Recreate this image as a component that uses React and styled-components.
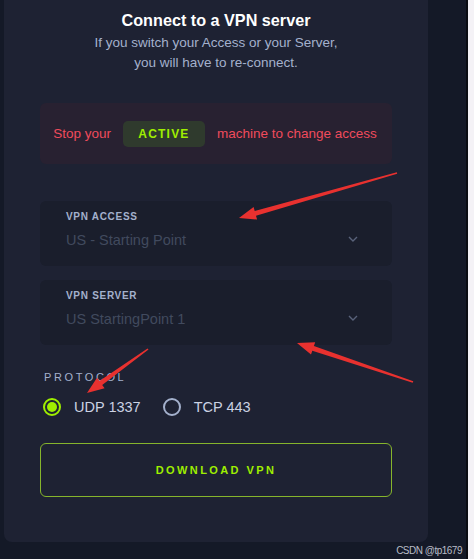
import React, { useState } from 'react';
import styled, { createGlobalStyle } from 'styled-components';

const GlobalStyle = createGlobalStyle`
  html, body {
    margin: 0;
    padding: 0;
    background: #141927;
    font-family: "Liberation Sans", Arial, sans-serif;
  }
  #root {
    height: 559px;
    overflow: hidden;
  }
`;

const Screen = styled.div`
  display: flex;
  height: 559px;
  position: relative;
`;

const Main = styled.div`
  flex: 1;
  display: flex;
  flex-direction: column;
  padding-left: 4px;
`;

const EdgeLine = styled.div`
  width: 2px;
  background: #0a0c12;
`;

const EdgeLight = styled.div`
  width: 6px;
  background: #f4f2f6;
`;

const Panel = styled.div`
  width: 424px;
  height: 542px;
  box-sizing: border-box;
  background: #1e2233;
  border-radius: 0 0 8px 8px;
  padding: 9px 36px 0;
  display: flex;
  flex-direction: column;
  align-items: stretch;
`;

const Title = styled.h1`
  margin: 0;
  text-align: center;
  font-size: 16.2px;
  font-weight: 700;
  color: #ffffff;
  line-height: 22px;
`;

const Subtitle = styled.p`
  margin: 2px 0 0;
  text-align: center;
  font-size: 13.5px;
  line-height: 20px;
  color: #a4b1cd;
`;

const Alert = styled.div`
  margin-top: 30px;
  height: 61px;
  border-radius: 6px;
  background: #282131;
  display: flex;
  align-items: center;
  justify-content: center;
  gap: 12px;
  font-size: 13.5px;
  color: #ef4b5c;
  padding-right: 2px;
`;

const Badge = styled.span`
  width: 82px;
  height: 26px;
  border-radius: 5px;
  background: #2f3a2d;
  color: #9fef00;
  font-weight: 700;
  font-size: 12px;
  letter-spacing: 1.2px;
  display: flex;
  align-items: center;
  justify-content: center;
`;

const SelectBox = styled.div`
  margin-top: ${p => p.$gap}px;
  height: 65px;
  box-sizing: border-box;
  border-radius: 6px;
  background: #1a1e2c;
  padding: 10px 34px 0 26px;
  display: grid;
  grid-template-columns: 1fr auto;
  grid-template-rows: auto auto;
  align-content: start;
  align-items: center;
`;

const FieldLabel = styled.div`
  grid-column: 1 / 3;
  font-size: 10px;
  font-weight: 700;
  letter-spacing: 0.7px;
  color: #a4b1cd;
  line-height: 12px;
`;

const FieldValue = styled.div`
  margin-top: 8px;
  font-size: 14.5px;
  color: #414a5e;
  line-height: 18px;
`;

const Chevron = styled.svg`
  margin-top: 5px;
  width: 10px;
  height: 6px;
`;

const ProtocolLabel = styled.div`
  margin-top: 25px;
  padding-left: 4px;
  font-size: 11px;
  letter-spacing: 2.6px;
  color: #a4b1cd;
  line-height: 14px;
`;

const RadioRow = styled.div`
  margin-top: 14px;
  padding-left: 3px;
  display: flex;
  align-items: center;
  gap: 22px;
`;

const RadioItem = styled.label`
  display: flex;
  align-items: center;
  gap: 13px;
  font-size: 14.5px;
  color: #cbd2e3;
  cursor: pointer;
`;

const RadioCircle = styled.span`
  width: 18px;
  height: 18px;
  box-sizing: border-box;
  border-radius: 50%;
  border: 2px solid ${p => (p.$on ? '#9fef00' : '#a4b1cd')};
  display: flex;
  align-items: center;
  justify-content: center;
  &::after {
    content: '';
    width: 10px;
    height: 10px;
    border-radius: 50%;
    background: ${p => (p.$on ? '#9fef00' : 'transparent')};
  }
`;

const DownloadButton = styled.button`
  margin-top: 27px;
  height: 54px;
  border-radius: 6px;
  border: 1px solid #86b52c;
  background: transparent;
  color: #9fef00;
  font-family: "Liberation Sans", Arial, sans-serif;
  font-weight: 700;
  font-size: 11px;
  letter-spacing: 2.4px;
  cursor: pointer;
`;

const Footer = styled.div`
  flex: 1;
  display: flex;
  justify-content: flex-end;
  align-items: center;
  padding-right: 4px;
  font-size: 10px;
  letter-spacing: -0.5px;
  color: #b9bcc6;
`;

const Arrows = styled.svg`
  position: absolute;
  left: 0;
  top: 0;
  width: 474px;
  height: 559px;
  pointer-events: none;
`;

function arrowPoints(x1, y1, x2, y2, tail, shaft, headLen, headW) {
  const dx = x2 - x1;
  const dy = y2 - y1;
  const len = Math.hypot(dx, dy);
  const ux = dx / len;
  const uy = dy / len;
  const nx = -uy;
  const ny = ux;
  const bx = x2 - ux * headLen;
  const by = y2 - uy * headLen;
  const pts = [
    [x1 + nx * tail, y1 + ny * tail],
    [bx + nx * shaft, by + ny * shaft],
    [bx + nx * headW, by + ny * headW],
    [x2, y2],
    [bx - nx * headW, by - ny * headW],
    [bx - nx * shaft, by - ny * shaft],
    [x1 - nx * tail, y1 - ny * tail],
  ];
  return pts.map(p => p.map(v => v.toFixed(1)).join(',')).join(' ');
}

const annotations = [
  [397, 173, 239, 218],
  [413, 382, 297, 343],
  [148, 349, 87, 393],
];

export default function App() {
  const [protocol, setProtocol] = useState('udp');

  return (
    <>
      <GlobalStyle />
      <Screen>
        <Main>
          <Panel>
            <Title>Connect to a VPN server</Title>
            <Subtitle>
              If you switch your Access or your Server,
              <br />
              you will have to re-connect.
            </Subtitle>

            <Alert>
              <span>Stop your</span>
              <Badge>ACTIVE</Badge>
              <span>machine to change access</span>
            </Alert>

            <SelectBox $gap={37}>
              <FieldLabel>VPN ACCESS</FieldLabel>
              <FieldValue>US - Starting Point</FieldValue>
              <Chevron viewBox="0 0 10 6">
                <path d="M1 1l4 4 4-4" fill="none" stroke="#59627a" strokeWidth="1.4" />
              </Chevron>
            </SelectBox>

            <SelectBox $gap={14}>
              <FieldLabel>VPN SERVER</FieldLabel>
              <FieldValue>US StartingPoint 1</FieldValue>
              <Chevron viewBox="0 0 10 6">
                <path d="M1 1l4 4 4-4" fill="none" stroke="#59627a" strokeWidth="1.4" />
              </Chevron>
            </SelectBox>

            <ProtocolLabel>PROTOCOL</ProtocolLabel>
            <RadioRow>
              <RadioItem onClick={() => setProtocol('udp')}>
                <RadioCircle $on={protocol === 'udp'} />
                UDP 1337
              </RadioItem>
              <RadioItem onClick={() => setProtocol('tcp')}>
                <RadioCircle $on={protocol === 'tcp'} />
                TCP 443
              </RadioItem>
            </RadioRow>

            <DownloadButton>DOWNLOAD VPN</DownloadButton>
          </Panel>
          <Footer>CSDN @tp1679</Footer>
        </Main>
        <EdgeLine />
        <EdgeLight />

        <Arrows viewBox="0 0 474 559">
          {annotations.map(([x1, y1, x2, y2], i) => (
            <polygon
              key={i}
              points={arrowPoints(x1, y1, x2, y2, 0.8, 2.4, 17, 6.5)}
              fill="#e8312f"
            />
          ))}
        </Arrows>
      </Screen>
    </>
  );
}
